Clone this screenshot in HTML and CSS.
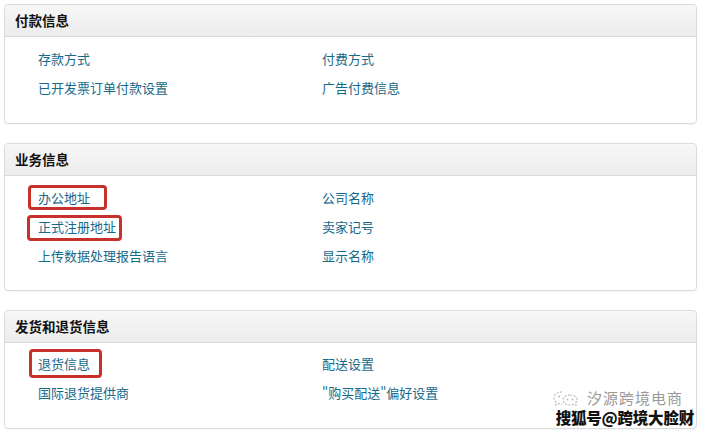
FILE: index.html
```html
<!DOCTYPE html>
<html lang="zh">
<head>
<meta charset="utf-8">
<link rel="stylesheet" href="styles.css">
</head>
<body>
<div class="page">
  <section class="panel">
    <div class="panel-head">付款信息</div>
    <div class="panel-body">
      <div class="col">
        <a class="link">存款方式</a>
        <a class="link">已开发票订单付款设置</a>
      </div>
      <div class="col">
        <a class="link">付费方式</a>
        <a class="link">广告付费信息</a>
      </div>
    </div>
  </section>
  <section class="panel panel-tall">
    <div class="panel-head">业务信息</div>
    <div class="panel-body">
      <div class="col">
        <a class="link"><span class="mark mark-a">办公地址</span></a>
        <a class="link"><span class="mark mark-b">正式注册地址</span></a>
        <a class="link">上传数据处理报告语言</a>
      </div>
      <div class="col">
        <a class="link">公司名称</a>
        <a class="link">卖家记号</a>
        <a class="link">显示名称</a>
      </div>
    </div>
  </section>
  <section class="panel panel-last">
    <div class="panel-head">发货和退货信息</div>
    <div class="panel-body">
      <div class="col">
        <a class="link"><span class="mark mark-c">退货信息</span></a>
        <a class="link">国际退货提供商</a>
      </div>
      <div class="col">
        <a class="link">配送设置</a>
        <a class="link">"购买配送"偏好设置</a>
      </div>
    </div>
  </section>
  <div class="watermark">
    <div class="wm-top">
      <svg class="wm-icon" width="28" height="16" viewBox="0 0 28 16">
        <path d="M9 2 C4 2 1 5 1 8 C1 10 2 11.5 3.5 12.5 L3 15 L6 13.5 C7 13.8 8 14 9 14" fill="none" stroke="#b8b8b8" stroke-width="1.2" stroke-dasharray="2 1.5"/>
        <path d="M17 5 C12.5 5 10 7.5 10 10 C10 12.5 12.5 15 17 15 C18 15 19 14.8 20 14.5 L23 15.5 L22.3 13 C23.5 12 24 11 24 10 C24 7.5 21.5 5 17 5 Z" fill="none" stroke="#b8b8b8" stroke-width="1.2" stroke-dasharray="2 1.5"/>
        <circle cx="6" cy="6.5" r="0.9" fill="#b8b8b8"/>
        <circle cx="14.5" cy="9.5" r="0.9" fill="#b8b8b8"/>
        <circle cx="19.5" cy="9.5" r="0.9" fill="#b8b8b8"/>
      </svg>
      <span class="wm-name">汐源跨境电商</span>
    </div>
    <div class="wm-bottom">搜狐号@跨境大脸财</div>
  </div>
</div>
</body>
</html>
```
FILE: styles.css
```css
* { box-sizing: border-box; }
html, body { margin: 0; padding: 0; background: #ffffff; }
body {
  font-family: "Noto Sans CJK SC", "Noto Sans", sans-serif;
  width: 707px;
  height: 434px;
  overflow: hidden;
}
.page {
  position: relative;
  padding: 4px 10px 0 4px;
  display: flex;
  flex-direction: column;
  gap: 19px;
  height: 434px;
}
.panel {
  border: 1px solid #dcdcdc;
  border-radius: 4px;
  background: #fff;
  box-shadow: 0 1px 1px rgba(0,0,0,0.04);
}
.panel-head {
  height: 32px;
  line-height: 31px;
  padding-left: 10px;
  font-size: 13.5px;
  font-weight: 700;
  color: #111;
  background: linear-gradient(#f7f7f7, #ececec);
  border-bottom: 1px solid #d8d8d8;
  border-radius: 4px 4px 0 0;
}
.panel-body {
  display: grid;
  grid-template-columns: 284px 1fr;
  padding: 7px 0 21px 33px;
}
.panel-tall .panel-body { padding-top: 7px; padding-bottom: 20px; }
.panel-last .panel-body { padding-top: 6px; padding-bottom: 21px; }
.col {
  display: flex;
  flex-direction: column;
}
.link {
  display: block;
  height: 29px;
  line-height: 29px;
  font-size: 13px;
  color: #17698a;
  text-decoration: none;
  white-space: nowrap;
}
.mark {
  position: relative;
}
.mark::after {
  content: "";
  position: absolute;
  border: 3px solid #c8302c;
  border-radius: 4px;
}
.mark-a::after { left: -10px; right: -17px; top: -3px; bottom: -3px; }
.mark-b::after { left: -11px; right: -6px; top: -2px; bottom: -5px; }
.mark-c::after { left: -9px; right: -12px; top: -5px; bottom: -5px; }

.watermark {
  position: absolute;
  right: 13px;
  bottom: 8px;
  display: flex;
  flex-direction: column;
  align-items: flex-end;
  gap: 3px;
}
.wm-top {
  display: flex;
  align-items: center;
  gap: 6px;
  margin-right: 11px;
  height: 16px;
}
.wm-icon { display: block; }
.wm-name {
  font-size: 15px;
  line-height: 16px;
  color: #9a9a9a;
  letter-spacing: 1px;
}
.wm-bottom {
  font-size: 15.5px;
  line-height: 17px;
  font-weight: 900;
  color: #111;
  letter-spacing: -0.2px;
  text-shadow: 1px 0 0 #fff, -1px 0 0 #fff, 0 1px 0 #fff, 0 -1px 0 #fff;
}
```
